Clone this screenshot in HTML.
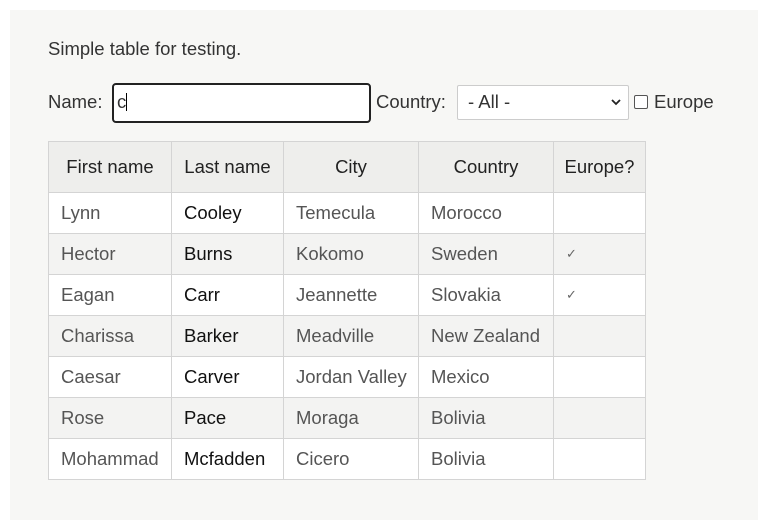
<!DOCTYPE html>
<html><head><style>
body{margin:0;width:768px;height:530px;background:#fff;font-family:"Liberation Sans",sans-serif;position:relative;overflow:hidden}
.panel{position:absolute;left:10px;top:10px;width:748px;height:510px;background:#f7f7f5}
.t{position:absolute;font-size:18.5px;color:#333;white-space:nowrap}
table{position:absolute;left:48px;top:141px;border-collapse:collapse;font-size:18.5px}
td,th{border:1px solid #d4d4d4;height:40px;padding:0 0 0 12px;text-align:left;color:#555;white-space:nowrap}
th{height:50px;background:#eeeeec;font-weight:normal;color:#222;text-align:center;padding:0}
tr:nth-child(even) td{background:#fff}
tr:nth-child(odd) td{background:#f3f3f2}
td:nth-child(2){color:#111}
.ck{font-size:13px;color:#666}
</style></head><body>
<div class="panel"></div>
<div class="t" style="left:48px;top:38px">Simple table for testing.</div>
<div class="t" style="left:48px;top:91px">Name:</div>
<div style="position:absolute;left:112px;top:83px;width:255px;height:36px;border:2px solid #222;border-radius:4px;background:#fff"></div>
<div class="t" style="left:117px;top:91px">c<span style="display:inline-block;width:1px;height:18px;background:#000;vertical-align:-3px"></span></div>
<div class="t" style="left:376px;top:91px">Country:</div>
<div style="position:absolute;left:457px;top:85px;width:170px;height:33px;border:1px solid #ccc;background:#fff;border-radius:2px"></div>
<div class="t" style="left:468px;top:91px">- All -</div>
<svg style="position:absolute;left:611px;top:98px" width="10" height="8"><path d="M1 2l4 4 4-4" fill="none" stroke="#222" stroke-width="1.8"/></svg>
<div style="position:absolute;left:634px;top:95px;width:12px;height:12px;border:1px solid #555;border-radius:2px;background:#fff"></div>
<div class="t" style="left:654px;top:91px">Europe</div>
<table>
<tr><th style="width:122px">First name</th><th style="width:111px">Last name</th><th style="width:134px">City</th><th style="width:134px">Country</th><th style="width:91px">Europe?</th></tr>
<tr><td>Lynn</td><td>Cooley</td><td>Temecula</td><td>Morocco</td><td></td></tr>
<tr><td>Hector</td><td>Burns</td><td>Kokomo</td><td>Sweden</td><td class="ck">✓</td></tr>
<tr><td>Eagan</td><td>Carr</td><td>Jeannette</td><td>Slovakia</td><td class="ck">✓</td></tr>
<tr><td>Charissa</td><td>Barker</td><td>Meadville</td><td>New Zealand</td><td></td></tr>
<tr><td>Caesar</td><td>Carver</td><td>Jordan Valley</td><td>Mexico</td><td></td></tr>
<tr><td>Rose</td><td>Pace</td><td>Moraga</td><td>Bolivia</td><td></td></tr>
<tr><td>Mohammad</td><td>Mcfadden</td><td>Cicero</td><td>Bolivia</td><td></td></tr>
</table>
</body></html>
